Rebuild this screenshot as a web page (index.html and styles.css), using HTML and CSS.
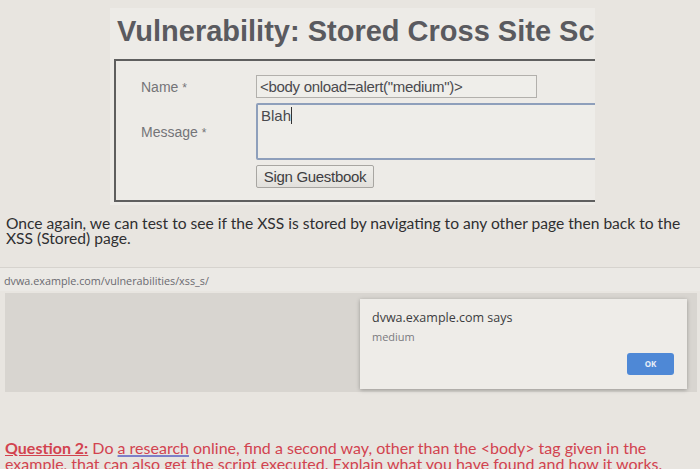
FILE: index.html
```html
<!DOCTYPE html>
<html lang="en">
<head>
    <meta charset="UTF-8">
    <meta name="viewport" content="width=device-width, initial-scale=1.0">
    <title>XSS Stored - Lab</title>
    <link rel="stylesheet" href="styles.css">
</head>
<body>
    <div class="dvwa-shot">
        <h1>Vulnerability: Stored Cross Site Scripting (XSS)</h1>
        <div class="guestbook">
            <div class="form-row">
                <label>Name <span class="req">*</span></label>
                <div class="text-input">&lt;body onload=alert("medium")&gt;</div>
            </div>
            <div class="form-row">
                <label>Message <span class="req">*</span></label>
                <div class="text-area">Blah<span class="caret"></span></div>
            </div>
            <div class="form-row">
                <label></label>
                <div class="sign-btn">Sign Guestbook</div>
            </div>
        </div>
    </div>

    <p class="doc-text">Once again, we can test to see if the XSS is stored by navigating to any other page then back to the XSS (Stored) page.</p>

    <div class="browser-shot">
        <div class="url-bar">dvwa.example.com/vulnerabilities/xss_s/</div>
        <div class="page-dim">
            <div class="alert-box">
                <div class="alert-title">dvwa.example.com says</div>
                <div class="alert-msg">medium</div>
                <div class="alert-actions">
                    <span class="ok-btn">OK</span>
                </div>
            </div>
        </div>
    </div>

    <p class="question"><span class="q-label">Question 2:</span> Do <span class="spell">a research</span> online, find a second way, other than the &lt;body&gt; tag given in the example, that can also get the script executed. Explain what you have found and how it works.</p>
</body>
</html>
```

FILE: styles.css
```css
body {
    margin: 0;
    background: #e8e5e0;
    font-family: 'Lato', sans-serif;
    color: #333;
    overflow: hidden;
    height: 469px;
}

.dvwa-shot {
    margin: 8px 0 0 110px;
    width: 485px;
    height: 197px;
    overflow: hidden;
    background: #edebe7;
    font-family: 'Liberation Sans', Arial, sans-serif;
}

.dvwa-shot h1 {
    margin: 0;
    padding: 6px 0 0 7px;
    font-size: 29px;
    font-weight: bold;
    color: #5a5a5f;
    white-space: nowrap;
    line-height: 34px;
}

.guestbook {
    margin: 11px 0 0 4px;
    width: 560px;
    border: 2px solid #5f5f5f;
    padding: 14px 0 12px 0;
}

.form-row {
    display: flex;
    align-items: center;
    margin-bottom: 5px;
}

.form-row:last-child {
    margin-bottom: 0;
}

.form-row label {
    width: 115px;
    padding-left: 25px;
    font-size: 14px;
    color: #747478;
}

.req {
    font-size: 12px;
}

.text-input {
    width: 276px;
    height: 21px;
    border: 1px solid #b2b0ac;
    padding-left: 3px;
    font-size: 15px;
    line-height: 21px;
    color: #4a4a4e;
    letter-spacing: -0.3px;
    background: #efeeea;
}

.text-area {
    width: 400px;
    height: 51px;
    border: 2px solid #8e9fbb;
    border-radius: 2px;
    padding: 1px 3px;
    font-size: 15px;
    line-height: 20px;
    color: #4a4a4e;
    background: #eeede9;
}

.caret {
    display: inline-block;
    width: 1px;
    height: 17px;
    background: #333;
    vertical-align: -3px;
}

.sign-btn {
    width: 116px;
    height: 21px;
    border: 1px solid #a8a6a2;
    border-radius: 2px;
    background: linear-gradient(#f0efeb, #e2e0dc);
    font-size: 15px;
    line-height: 21px;
    text-align: center;
    color: #3e3e42;
    letter-spacing: -0.3px;
}

.doc-text {
    margin: 11px 10px 0 6px;
    font-size: 15.6px;
    line-height: 14.5px;
    color: #2f2f31;
}

.browser-shot {
    margin-top: 22px;
    border-top: 1px solid #d6d3ce;
}

.url-bar {
    height: 23px;
    line-height: 26px;
    padding-left: 4px;
    font-family: 'Open Sans', sans-serif;
    font-size: 10.8px;
    color: #6a6a70;
    background: #ebe9e5;
}

.page-dim {
    position: relative;
    margin: 2px 3px 0 5px;
    height: 99px;
    background: #d8d5d0;
}

.alert-box {
    position: absolute;
    left: 355px;
    top: 6px;
    width: 327px;
    height: 90px;
    background: #eeece8;
    box-shadow: 0 1px 4px rgba(0, 0, 0, 0.3);
    font-family: 'Open Sans', sans-serif;
}

.alert-title {
    padding: 10px 0 0 12px;
    font-size: 12.5px;
    color: #3c3c40;
}

.alert-msg {
    padding: 3px 0 0 12px;
    font-size: 11px;
    color: #7a7a7e;
}

.alert-actions {
    display: flex;
    justify-content: flex-end;
    padding: 9px 13px 0 0;
}

.ok-btn {
    width: 47px;
    height: 22px;
    line-height: 22px;
    text-align: center;
    border-radius: 3px;
    background: #4e88d6;
    color: #e8eef8;
    font-size: 8px;
    font-weight: bold;
}

.question {
    margin: 48px 10px 0 5px;
    font-size: 16px;
    line-height: 16px;
    color: #d2434f;
}

.q-label {
    font-weight: bold;
    text-decoration: underline;
}

.spell {
    text-decoration: underline;
    text-decoration-color: #7c7fc8;
    text-decoration-thickness: 2px;
}
```
